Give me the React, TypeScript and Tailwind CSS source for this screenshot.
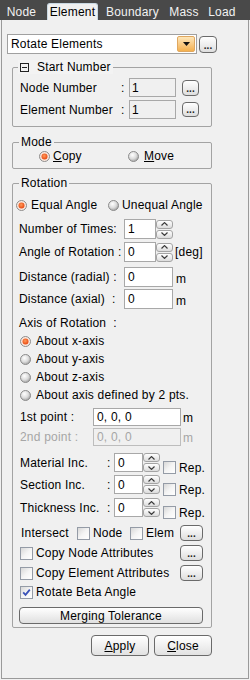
import React, { useId } from "react";

function Radio({ checked }: { checked?: boolean }) {
  const id = useId().replace(/[^a-zA-Z0-9]/g, "");
  return (
    <svg width="11" height="11" viewBox="0 0 11 11" className="shrink-0">
      <defs>
        <radialGradient id={`rg${id}`} cx="40%" cy="35%" r="70%">
          <stop offset="0%" stopColor="#ffffff" />
          <stop offset="55%" stopColor="#dcdcdc" />
          <stop offset="100%" stopColor="#9c9c9c" />
        </radialGradient>
        <radialGradient id={`ro${id}`} cx="45%" cy="40%" r="60%">
          <stop offset="0%" stopColor="#ff9a5a" />
          <stop offset="100%" stopColor="#e8460f" />
        </radialGradient>
      </defs>
      <circle cx="5.5" cy="5.5" r="5" fill={checked ? "#fbe7dc" : `url(#rg${id})`} stroke="#8c8c8c" strokeWidth="1" />
      {checked && <circle cx="5.5" cy="5.5" r="3" fill={`url(#ro${id})`} />}
    </svg>
  );
}

function Check({ checked }: { checked?: boolean }) {
  return (
    <div className="w-[13px] h-[13px] shrink-0 border border-[#949ba6] bg-gradient-to-br from-[#d8d8d8] via-[#f4f4f4] to-white flex items-center justify-center">
      {checked && (
        <svg width="9" height="9" viewBox="0 0 9 9">
          <path d="M1.2 4.4 L3.5 6.8 L7.8 1.6" stroke="#3a52b8" strokeWidth="1.8" fill="none" />
        </svg>
      )}
    </div>
  );
}

function SpinBtn({ up }: { up?: boolean }) {
  return (
    <div className="h-[9px] w-[17px] rounded-[3px] border border-[#a4a4a4] bg-gradient-to-b from-white to-[#dcdcdc] flex items-center justify-center">
      <svg width="7" height="4" viewBox="0 0 7 4">
        <path d={up ? "M0.5 3.5 L3.5 0.6 L6.5 3.5" : "M0.5 0.5 L3.5 3.4 L6.5 0.5"} stroke="#3a3a3a" strokeWidth="1.2" fill="none" />
      </svg>
    </div>
  );
}

function Spinner() {
  return (
    <div className="flex flex-col gap-[1px] w-[17px] shrink-0">
      <SpinBtn up />
      <SpinBtn />
    </div>
  );
}

function Dots({ className }: { className: string }) {
  return (
    <div className={`${className} shrink-0 rounded-[4px] border border-[#6a6a6a] bg-gradient-to-b from-white to-[#dedede] flex items-end justify-center pb-[3px]`}>
      <span className="text-[10px] leading-[6px] tracking-[0px] font-bold text-[#222]">...</span>
    </div>
  );
}

function Tab({ w, children, active }: { w: string; children: React.ReactNode; active?: boolean }) {
  if (active) {
    return (
      <div className={`${w} h-[17px] bg-[#f0f0f0] rounded-t-[3px] border border-b-0 border-[#c9d8e2] flex items-center justify-center text-black`}>
        {children}
      </div>
    );
  }
  return (
    <div className={`${w} h-[20px] pt-[3px] flex items-center justify-center text-[#f2f2f2]`}>{children}</div>
  );
}

export default function App() {
  return (
    <div className="w-[250px] h-[680px] bg-[#f0f0f0] font-['Liberation_Sans',Arial,sans-serif] text-[12px] tracking-[0.2px] text-black overflow-hidden leading-[14px]">
      {/* tab bar */}
      <div className="h-[20px] bg-[#494949] flex items-end">
        <Tab w="w-[43px]">Node</Tab>
        <div className="w-[4px]" />
        <Tab w="w-[51px]" active>Element</Tab>
        <Tab w="w-[69px]">Boundary</Tab>
        <Tab w="w-[34px]">Mass</Tab>
        <Tab w="w-[42px]">Load</Tab>
      </div>

      {/* panel */}
      <div className="ml-[1px] w-[248px] h-[659px] border-x border-b border-[#9a9a9a] pt-[14px] pl-[5px] flex flex-col">
        {/* dropdown */}
        <div className="flex h-[20px] items-center">
          <div className="w-[190px] h-[20px] border border-[#a0a0a0] bg-white flex items-center pl-[3px] pr-[1px]">
            <span className="flex-1">Rotate Elements</span>
            <div className="w-[18px] h-[16px] rounded-[2px] border border-[#e0a860] bg-gradient-to-b from-[#fde6b8] to-[#f4b04c] flex items-center justify-center">
              <svg width="7" height="4" viewBox="0 0 7 4">
                <path d="M0 0 L7 0 L3.5 4 Z" fill="#111" />
              </svg>
            </div>
          </div>
          <Dots className="ml-[2px] w-[18px] h-[17px]" />
        </div>

        {/* Start Number */}
        <div className="relative mt-[13px] ml-[5px] w-[200px] border border-[#a3a3a3] rounded-[2px] pt-[10px] pb-[7px] flex flex-col gap-[3px]">
          <div className="absolute left-[5px] top-[-8px] px-[2px] bg-[#f3f3f3] flex items-center h-[14px]">
            <div className="w-[9px] h-[9px] border border-[#222] flex items-center justify-center">
              <div className="w-[5px] h-[1px] bg-[#222]" />
            </div>
            <span className="ml-[8px]">Start Number</span>
          </div>
          {[
            ["Node Number", "w-[17px] h-[16px]"],
            ["Element Number", "w-[17px] h-[15px]"],
          ].map(([label, b]) => (
            <div key={label} className="flex items-center h-[19px] pl-[7px]">
              <span className="w-[101px]">{label}</span>
              <span className="w-[8px]">:</span>
              <div className="w-[47px] h-[19px] border border-[#a8a8a8] bg-[#f0f0f0] flex items-center pl-[2px]">1</div>
              <Dots className={`ml-[6px] ${b}`} />
            </div>
          ))}
        </div>

        {/* Mode */}
        <div className="relative mt-[15px] ml-[5px] w-[200px] border border-[#a3a3a3] rounded-[2px] pt-[5px] pb-[4px]">
          <div className="absolute left-[6px] top-[-8px] px-[2px] bg-[#f0f0f0] h-[14px]">Mode</div>
          <div className="flex items-center h-[16px] pl-[26px]">
            <div className="w-[89px] flex items-center">
              <Radio checked />
              <span className="ml-[3px]"><u>C</u>opy</span>
            </div>
            <Radio />
            <span className="ml-[5px]"><u>M</u>ove</span>
          </div>
        </div>

        {/* Rotation */}
        <div className="relative mt-[14px] ml-[5px] w-[200px] border border-[#a3a3a3] rounded-[2px] pb-[3px] flex flex-col">
          <div className="absolute left-[6px] top-[-8px] px-[2px] bg-[#f0f0f0] h-[14px]">Rotation</div>

          <div className="mt-[13px] h-[16px] flex items-center pl-[3px]">
            <div className="w-[92px] flex items-center">
              <Radio checked />
              <span className="ml-[4px]">Equal Angle</span>
            </div>
            <Radio />
            <span className="ml-[3px]">Unequal Angle</span>
          </div>

          <div className="mt-[6px] h-[20px] flex items-center pl-[6px]">
            <span className="w-[105px]">Number of Times:</span>
            <div className="w-[32px] h-[20px] border border-[#a8a8a8] bg-white flex items-center pl-[3px]">1</div>
            <Spinner />
          </div>

          <div className="mt-[3px] h-[20px] flex items-center pl-[6px]">
            <span className="w-[105px]">Angle of Rotation :</span>
            <div className="w-[32px] h-[20px] border border-[#a8a8a8] bg-white flex items-center pl-[3px]">0</div>
            <Spinner />
            <span className="ml-[2px]">[deg]</span>
          </div>

          <div className="mt-[5px] h-[20px] flex items-center pl-[6px]">
            <span className="w-[105px]">Distance (radial) :</span>
            <div className="w-[49px] h-[20px] border border-[#a8a8a8] bg-white flex items-center pl-[3px]">0</div>
            <span className="ml-[3px] mt-[3px]">m</span>
          </div>

          <div className="mt-[2px] h-[20px] flex items-center pl-[6px]">
            <span className="w-[105px]">Distance (axial)&nbsp; :</span>
            <div className="w-[49px] h-[20px] border border-[#a8a8a8] bg-white flex items-center pl-[3px]">0</div>
            <span className="ml-[3px] mt-[3px]">m</span>
          </div>

          <div className="mt-[6px] h-[16px] flex items-center pl-[6px]">Axis of Rotation&nbsp; :</div>

          {["About x-axis", "About y-axis", "About z-axis", "About axis defined by 2 pts."].map((t, i) => (
            <div key={t} className="mt-[2px] h-[16px] flex items-center pl-[7px]">
              <Radio checked={i === 0} />
              <span className="ml-[5px]">{t}</span>
            </div>
          ))}

          <div className="mt-[5px] h-[18px] flex items-center pl-[7px]">
            <span className="w-[73px]">1st point :</span>
            <div className="w-[88px] h-[18px] border border-[#a8a8a8] bg-white flex items-center pl-[3px]">0, 0, 0</div>
            <span className="ml-[2px] mt-[2px]">m</span>
          </div>

          <div className="mt-[2px] h-[18px] flex items-center pl-[7px] text-[#a6a6a6]">
            <span className="w-[73px]">2nd point :</span>
            <div className="w-[88px] h-[18px] border border-[#bdbdbd] bg-[#f0f0f0] flex items-center pl-[3px]">0, 0, 0</div>
            <span className="ml-[2px] mt-[2px]">m</span>
          </div>

          {[
            ["Material Inc.", "mt-[7px]"],
            ["Section Inc.", "mt-[3px]"],
            ["Thickness Inc.", "mt-[4px]"],
          ].map(([label, m]) => (
            <div key={label} className={`${m} h-[19px] flex items-center pl-[7px]`}>
              <span className="w-[87px]">{label}</span>
              <span className="w-[7px]">:</span>
              <div className="w-[29px] h-[19px] border border-[#a8a8a8] bg-white flex items-center pl-[3px]">0</div>
              <Spinner />
              <div className="self-end mb-[-2px] h-[13px] flex items-center ml-[3px]">
                <Check />
                <span className="ml-[3px]">Rep.</span>
              </div>
            </div>
          ))}

          <div className="mt-[8px] h-[16px] flex items-center pl-[8px] pr-[8px]">
            <span className="w-[56px]">Intersect</span>
            <Check />
            <span className="ml-[3px] w-[37px]">Node</span>
            <Check />
            <span className="ml-[3px]">Elem</span>
            <Dots className="ml-auto w-[23px] h-[16px]" />
          </div>

          <div className="mt-[4px] h-[16px] flex items-center pl-[7px] pr-[8px]">
            <Check />
            <span className="ml-[3px]">Copy Node Attributes</span>
            <Dots className="ml-auto w-[23px] h-[16px]" />
          </div>

          <div className="mt-[4px] h-[16px] flex items-center pl-[7px] pr-[8px]">
            <Check />
            <span className="ml-[3px]">Copy Element Attributes</span>
            <Dots className="ml-auto w-[23px] h-[16px]" />
          </div>

          <div className="mt-[3px] h-[16px] flex items-center pl-[7px]">
            <Check checked />
            <span className="ml-[3px]">Rotate Beta Angle</span>
          </div>

          <div className="mt-[7px] ml-[6px] w-[184px] h-[17px] rounded-[4px] border border-[#6a6a6a] bg-gradient-to-b from-white to-[#e0e0e0] flex items-center justify-center">
            Merging Tolerance
          </div>
        </div>

        {/* buttons */}
        <div className="mt-[7px] flex">
          <div className="ml-[84px] w-[58px] h-[21px] rounded-[4px] border border-[#6a6a6a] bg-gradient-to-b from-white to-[#e2e2e2] flex items-center justify-center">
            <span><u>A</u>pply</span>
          </div>
          <div className="ml-[5px] w-[58px] h-[21px] rounded-[4px] border border-[#6a6a6a] bg-gradient-to-b from-white to-[#e2e2e2] flex items-center justify-center">
            <span><u>C</u>lose</span>
          </div>
        </div>
      </div>
    </div>
  );
}
